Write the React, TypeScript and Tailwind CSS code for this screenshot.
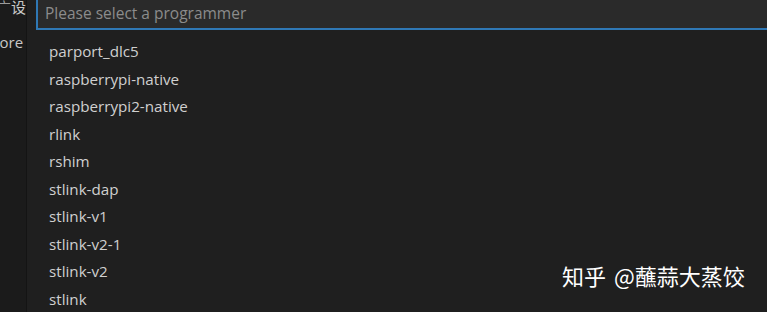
const programmers = [
  "parport_dlc5",
  "raspberrypi-native",
  "raspberrypi2-native",
  "rlink",
  "rshim",
  "stlink-dap",
  "stlink-v1",
  "stlink-v2-1",
  "stlink-v2",
  "stlink",
];

const ui = { fontFamily: '"Open Sans", "Noto Sans", "Noto Sans CJK SC", sans-serif' };

export default function App() {
  return (
    <div className="relative flex h-[312px] w-[767px] overflow-hidden bg-[#1f1f1f]" style={ui}>
      <aside className="flex w-[27px] shrink-0 flex-col overflow-hidden border-r border-[#141414] bg-[#1b1b1b] text-[15px] text-[#c8c8c8]">
        <div className="-mt-[5px] ml-[-4px] flex h-[22px] items-center whitespace-nowrap leading-none" style={{ fontFamily: '"Noto Sans CJK SC", sans-serif' }}>
          <span className="text-[#9a9a9a]">广</span>
          <span>设</span>
        </div>
        <div className="ml-[-14px] mt-[18px] whitespace-nowrap leading-none">More</div>
      </aside>

      <main className="flex min-w-0 flex-1 flex-col pl-[9px]">
        <div className="flex h-[30px] shrink-0 items-center border-b-2 border-l-2 border-[#2f78b5] bg-[#2a2a2a] pl-[7px]">
          <span className="text-[15.5px] text-[#8c8c8c]">Please select a programmer</span>
        </div>
        <ul className="mt-[8px] flex flex-col">
          {programmers.map((name) => (
            <li key={name} className="flex h-[27.5px] items-center pl-[13px] text-[15.2px] text-[#d0d0d0]">
              {name}
            </li>
          ))}
        </ul>
      </main>

      <div
        className="absolute left-[562px] top-[264px] whitespace-nowrap text-[22px] leading-none text-white"
        style={{ fontFamily: '"Noto Sans CJK SC", sans-serif' }}
      >
        知乎 <span className="ml-[3px]">@蘸蒜大蒸饺</span>
      </div>
    </div>
  );
}
